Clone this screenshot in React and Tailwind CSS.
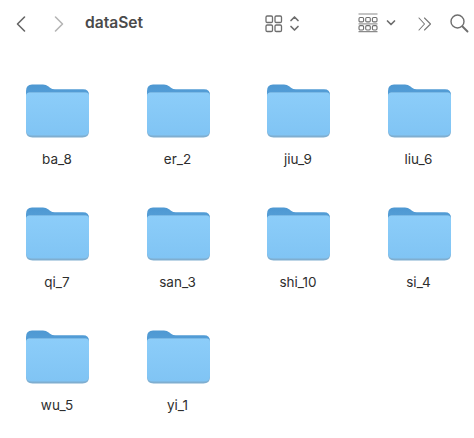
import React from "react";

const names = ["ba_8","er_2","jiu_9","liu_6","qi_7","san_3","shi_10","si_4","wu_5","yi_1"];

function Folder() {
  return (
    <svg width="63" height="54" viewBox="0 0 63 54" className="block">
      <defs>
        <linearGradient id="fb" x1="0" y1="0" x2="0" y2="1">
          <stop offset="0" stopColor="#8ccdf9" />
          <stop offset="1" stopColor="#80c4f4" />
        </linearGradient>
        <linearGradient id="fk" x1="0" y1="0" x2="0" y2="1">
          <stop offset="0" stopColor="#4e98d2" />
          <stop offset="1" stopColor="#5aa4dc" />
        </linearGradient>
      </defs>
      <path d="M0 7 Q0 0.5 6 0.5 H17 Q20 0.5 22.5 2.5 L24 3.7 Q26 5.2 29 5.2 H57 Q63 5.2 63 11 V20 H0 Z" fill="url(#fk)" />
      <path d="M0 12 Q0 8.5 3.5 8.5 H59.5 Q63 8.5 63 12 V47 Q63 53.5 56.5 53.5 H6.5 Q0 53.5 0 47 Z" fill="#7faed0" />
      <path d="M0 12 Q0 8.5 3.5 8.5 H59.5 Q63 8.5 63 12 V46 Q63 51.5 57 51.5 H6 Q0 51.5 0 46 Z" fill="url(#fb)" />
    </svg>
  );
}

export default function App() {
  return (
    <div className="w-[474px] h-[438px] bg-white overflow-hidden font-['Inter','Liberation_Sans',sans-serif]">
      <div className="h-[46px] flex items-center">
        <svg width="12" height="18" viewBox="0 0 12 18" className="ml-[15px] mt-[1px]" fill="none" stroke="#666" strokeWidth="1.6" strokeLinecap="round" strokeLinejoin="round">
          <path d="M9.5 2 L2.5 9 L9.5 16" />
        </svg>
        <svg width="12" height="18" viewBox="0 0 12 18" className="ml-[26px] mt-[1px]" fill="none" stroke="#b5b5b5" strokeWidth="1.6" strokeLinecap="round" strokeLinejoin="round">
          <path d="M2.5 2 L9.5 9 L2.5 16" />
        </svg>
        <span className="ml-[20px] w-[60px] text-[15.6px] font-semibold text-[#4a4a4a]">dataSet</span>
        <svg width="18" height="18" viewBox="0 0 18 18" className="ml-[120px] mt-[1px]" fill="none" stroke="#6e6e6e" strokeWidth="1.3">
          <rect x="1" y="1" width="6.5" height="6.5" rx="1.3" />
          <rect x="10" y="1" width="6.5" height="6.5" rx="1.3" />
          <rect x="1" y="10" width="6.5" height="6.5" rx="1.3" />
          <rect x="10" y="10" width="6.5" height="6.5" rx="1.3" />
        </svg>
        <svg width="11" height="17" viewBox="0 0 11 17" className="ml-[6px] mt-[1px]" fill="none" stroke="#6e6e6e" strokeWidth="1.7" strokeLinecap="round" strokeLinejoin="round">
          <path d="M2 5.5 L5.5 2 L9 5.5" />
          <path d="M2 11.5 L5.5 15 L9 11.5" />
        </svg>
        <svg width="20" height="20" viewBox="0 0 20 20" className="ml-[58px]" fill="none" stroke="#6e6e6e" strokeWidth="1.1">
          <path d="M0.5 1 H19.5 M0.5 18.6 H19.5" strokeWidth="1.2" stroke="#8a8a8a" />
          <rect x="1" y="4.5" width="4.6" height="4.4" rx="1.2" />
          <rect x="7.7" y="4.5" width="4.6" height="4.4" rx="1.2" />
          <rect x="14.4" y="4.5" width="4.6" height="4.4" rx="1.2" />
          <path d="M0.5 10.9 H19.5" stroke="#8a8a8a" />
          <rect x="1" y="12.6" width="4.6" height="4.4" rx="1.2" />
          <rect x="7.7" y="12.6" width="4.6" height="4.4" rx="1.2" />
          <rect x="14.4" y="12.6" width="4.6" height="4.4" rx="1.2" />
        </svg>
        <svg width="10" height="8" viewBox="0 0 10 8" className="ml-[8px]" fill="none" stroke="#6e6e6e" strokeWidth="1.7" strokeLinecap="round" strokeLinejoin="round">
          <path d="M1.5 2 L5 5.5 L8.5 2" />
        </svg>
        <svg width="14" height="14" viewBox="0 0 14 14" className="ml-[22px] mt-[2px]" fill="none" stroke="#777" strokeWidth="1.1" strokeLinecap="round" strokeLinejoin="round">
          <path d="M1 1 L6.5 7 L1 13" />
          <path d="M6.5 1 L12.5 7 L6.5 13" />
        </svg>
        <svg width="19" height="19" viewBox="0 0 19 19" className="ml-[18px]" fill="none" stroke="#6e6e6e" strokeWidth="1.4" strokeLinecap="round">
          <circle cx="7.5" cy="7.5" r="6.5" />
          <path d="M12.5 12.5 L17.5 17.5" strokeWidth="1.9" />
        </svg>
      </div>
      <div className="grid grid-cols-[repeat(4,63px)] gap-x-[57.5px] auto-rows-[123px] pl-[26px] pt-[38px]">
        {names.map((n) => (
          <div key={n} className="flex flex-col items-center w-[63px]">
            <Folder />
            <span className="mt-[13px] pr-[1px] text-[13.5px] leading-[16px] whitespace-nowrap text-[#2e2e2e]">{n}</span>
          </div>
        ))}
      </div>
    </div>
  );
}
